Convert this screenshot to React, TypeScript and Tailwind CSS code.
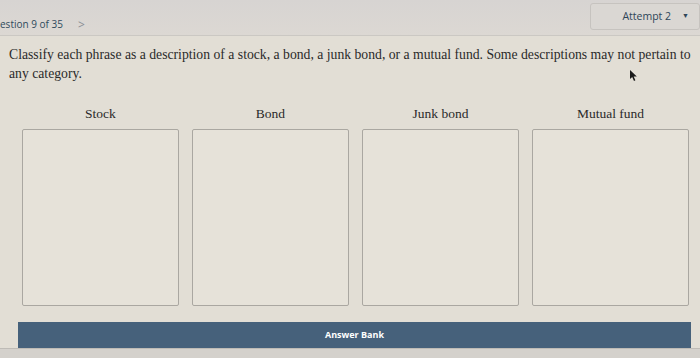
const categories = ["Stock", "Bond", "Junk bond", "Mutual fund"];

export default function App() {
  return (
    <div className="relative w-[700px] h-[358px] overflow-hidden bg-[#e2ded5] font-['Liberation_Serif',serif]">
      {/* top bar */}
      <div className="flex h-[36px] items-start justify-between border-b border-[#cbc8c3] bg-gradient-to-b from-[#d7d4d2] to-[#dcd8d3]">
        <div className="flex items-center gap-[15px] pt-[17px] font-['Open_Sans',sans-serif] text-[10px] text-[#2f4a5c]">
          <span>estion 9 of 35</span>
          <span className="text-[#8a8f95] text-[12px] leading-none">&gt;</span>
        </div>
        <div className="mt-[3px] flex h-[27px] w-[110px] items-center justify-end gap-[11px] rounded-[3px] border border-[#c6c3bf] bg-[#dad7d3] pr-[10px] font-['Open_Sans',sans-serif] text-[10.5px] text-[#2e4558]">
          <span>Attempt 2</span>
          <span className="text-[7px]">▼</span>
        </div>
      </div>

      {/* question */}
      <p className="pl-[9px] pr-[6px] pt-[9px] text-[13.7px] leading-[19px] text-[#2a2a2a]">
        Classify each phrase as a description of a stock, a bond, a junk bond, or a mutual fund. Some descriptions may not pertain to any category.
      </p>

      {/* bins */}
      <div className="mt-[22px] grid grid-cols-4 gap-x-[13px] pl-[22px] pr-[11px]">
        {categories.map((c) => (
          <div key={c} className="flex flex-col items-center">
            <div className="h-[17px] text-[13.5px] leading-[17px] text-[#2a2a2a]">{c}</div>
            <div className="mt-[7px] h-[177px] w-full rounded-[2px] border border-[#aaa7a1] bg-[#e6e2d9]" />
          </div>
        ))}
      </div>

      {/* answer bank */}
      <div className="ml-[18px] mt-[16px] mr-[9px] flex h-[26px] items-center justify-center bg-[#46617b] font-['Open_Sans',sans-serif] text-[9px] font-bold text-white">
        Answer Bank
      </div>
      <div className="h-[10px] border-t border-[#bebbb6] bg-[#d4d1cc]" />

      {/* mouse cursor */}
      <svg className="absolute left-[630px] top-[70px]" width="8" height="12" viewBox="0 0 8 12">
        <path d="M0 0 L0 9 L2.2 7 L4 11 L5.4 10.3 L3.7 6.5 L6.8 6.5 Z" fill="#1a1a1a" />
      </svg>
    </div>
  );
}
